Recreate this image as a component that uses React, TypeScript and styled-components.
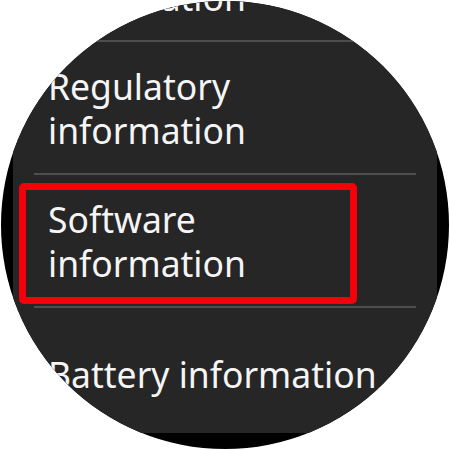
import styled, { createGlobalStyle } from "styled-components";

const GlobalStyle = createGlobalStyle`
    html, body {
        margin: 0;
        padding: 0;
        background: #ffffff;
    }
    body {
        font-family: "Noto Sans", "Open Sans", sans-serif;
    }
`;

const Watch = styled.div`
    width: 448px;
    height: 448px;
    margin: 1px auto 0;
    border-radius: 50%;
    overflow: hidden;
    background: #000000;
`;

const Screen = styled.div`
    height: 432px;
    margin: 0 12px;
    background: #262626;
    overflow: hidden;
`;

const List = styled.ul`
    list-style: none;
    margin: -92px 0 0;
    padding: 0;
`;

const Item = styled.li<{ $last?: boolean }>`
    position: relative;
    min-height: 131px;
    margin: 0 21px;
    padding: 0 0 0 14px;
    display: flex;
    align-items: center;
    border-bottom: ${(p) => (p.$last ? "none" : "2px solid #4e4e4e")};
    color: #f5f5f5;
    font-size: 35.5px;
    line-height: 44px;
`;

const Label = styled.div`
    padding-top: 1px;
`;

const Highlight = styled.span`
    position: absolute;
    top: 8px;
    left: -15px;
    width: 338px;
    height: 121px;
    box-sizing: border-box;
    border: 7px solid #f5000a;
    border-radius: 5px;
    pointer-events: none;
`;

const items = [
    { label: ["Device", "information"] },
    { label: ["Regulatory", "information"] },
    { label: ["Software", "information"], selected: true },
    { label: ["Battery information"] },
];

export default function App() {
    return (
        <>
            <GlobalStyle />
            <Watch>
                <Screen>
                    <List>
                        {items.map((item, i) => (
                            <Item key={i} $last={i === items.length - 1}>
                                <Label>
                                    {item.label.map((line) => (
                                        <div key={line}>{line}</div>
                                    ))}
                                </Label>
                                {item.selected && <Highlight />}
                            </Item>
                        ))}
                    </List>
                </Screen>
            </Watch>
        </>
    );
}
